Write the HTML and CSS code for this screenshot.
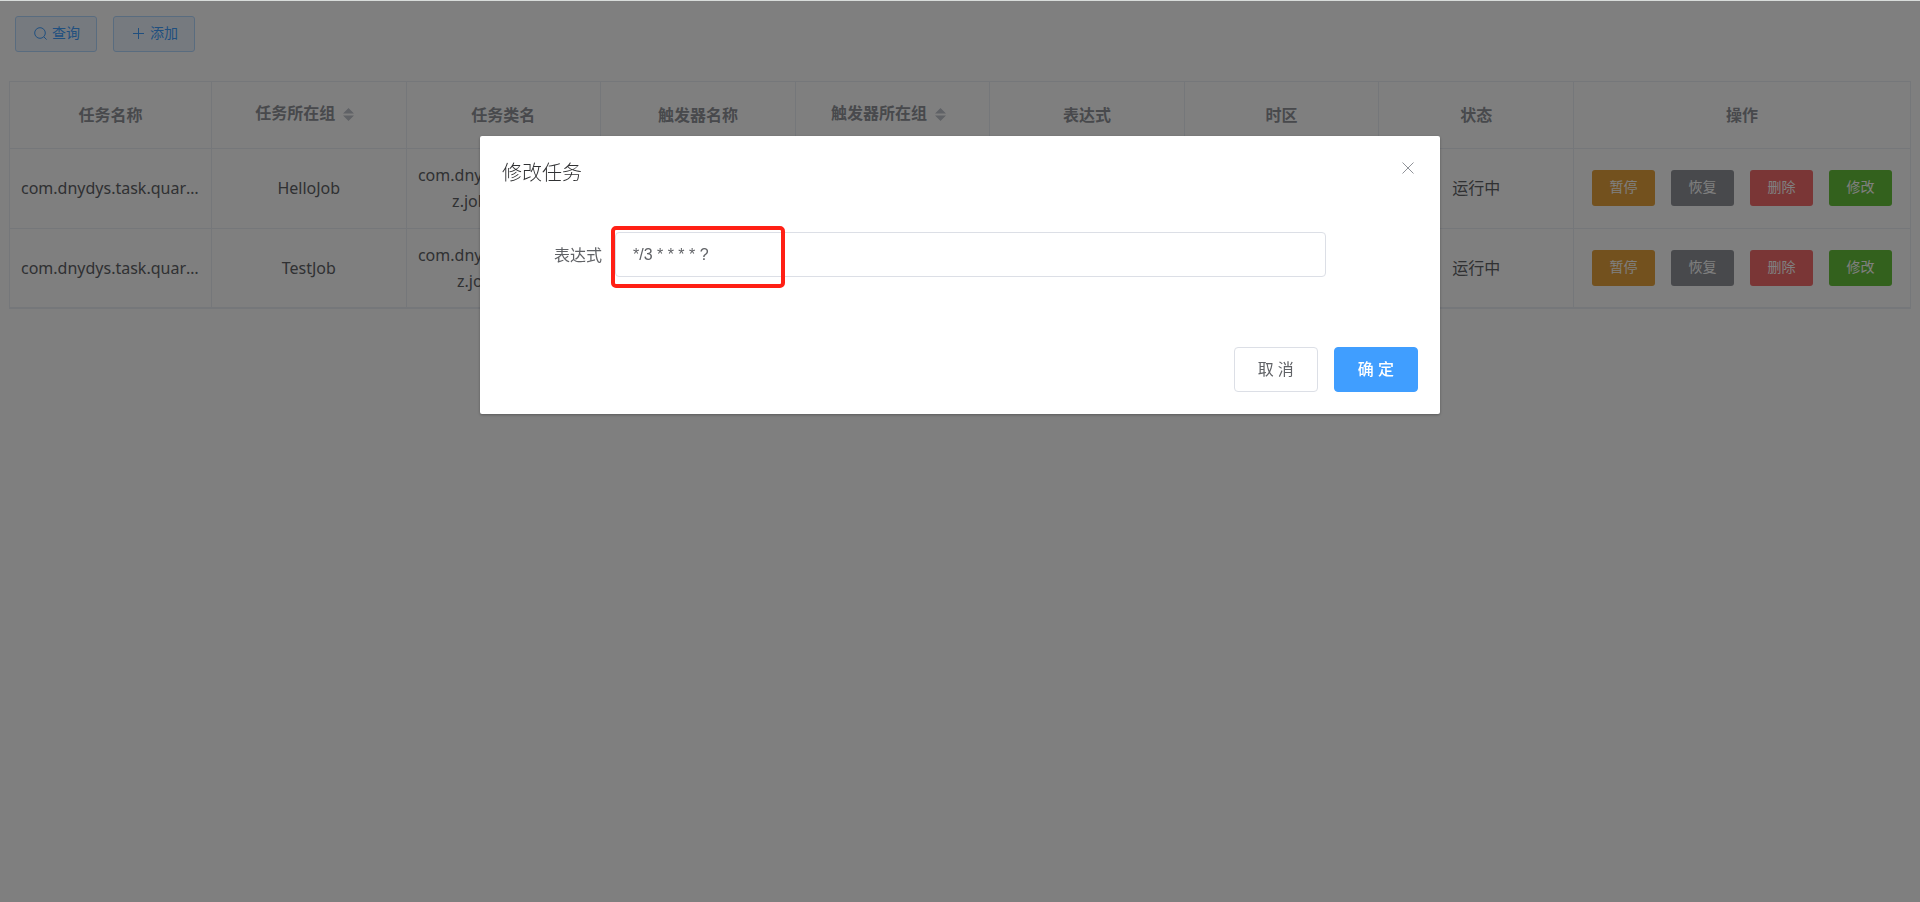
FILE: index.html
```html
<!DOCTYPE html>
<html lang="zh-CN">
<head>
<meta charset="utf-8">
<title>任务管理</title>
<link rel="stylesheet" href="styles.css">
</head>
<body>
<main class="page">
  <div class="toolbar">
    <button class="btn btn-plain" type="button"><svg class="icon" viewBox="0 0 13 13" aria-hidden="true"><circle cx="6" cy="6" r="5.3"/><path d="M9.8 9.8L12.6 12.6"/></svg>查询</button>
    <button class="btn btn-plain" type="button"><svg class="icon" viewBox="0 0 13 13" aria-hidden="true"><path d="M6.5 1V12M1 6.5H12"/></svg>添加</button>
  </div>
  <table class="table">
    <colgroup><col class="col-name"><col><col><col><col><col><col><col><col class="col-actions"></colgroup>
    <thead>
      <tr>
        <th>任务名称</th>
        <th class="sortable">任务所在组<svg class="caret" viewBox="0 0 12 14" aria-hidden="true"><path d="M6 0L12 6H0ZM6 14L0 8H12Z"/></svg></th>
        <th>任务类名</th>
        <th>触发器名称</th>
        <th class="sortable">触发器所在组<svg class="caret" viewBox="0 0 12 14" aria-hidden="true"><path d="M6 0L12 6H0ZM6 14L0 8H12Z"/></svg></th>
        <th>表达式</th>
        <th>时区</th>
        <th>状态</th>
        <th>操作</th>
      </tr>
    </thead>
    <tbody>
      <tr>
        <td class="ellipsis">com.dnydys.task.quartz.job.HelloJob</td>
        <td>HelloJob</td>
        <td>com.dnydys.task.quartz.job.HelloJob</td>
        <td></td><td></td><td></td><td></td>
        <td>运行中</td>
        <td><div class="actions">
          <button class="btn btn-warning" type="button">暂停</button>
          <button class="btn btn-info" type="button">恢复</button>
          <button class="btn btn-danger" type="button">删除</button>
          <button class="btn btn-success" type="button">修改</button>
        </div></td>
      </tr>
      <tr>
        <td class="ellipsis">com.dnydys.task.quartz.job.TestJob</td>
        <td>TestJob</td>
        <td>com.dnydys.task.quartz.job.TestJob</td>
        <td></td><td></td><td></td><td></td>
        <td>运行中</td>
        <td><div class="actions">
          <button class="btn btn-warning" type="button">暂停</button>
          <button class="btn btn-info" type="button">恢复</button>
          <button class="btn btn-danger" type="button">删除</button>
          <button class="btn btn-success" type="button">修改</button>
        </div></td>
      </tr>
    </tbody>
  </table>
</main>
<div class="overlay">
  <section class="dialog" role="dialog" aria-modal="true" aria-labelledby="dialog-title">
    <header class="dialog-header">
      <h2 class="dialog-title" id="dialog-title">修改任务</h2>
      <button class="close" type="button" aria-label="关闭"><svg viewBox="0 0 12 12" aria-hidden="true"><path d="M.5 .5L11.5 11.5M11.5 .5L.5 11.5"/></svg></button>
    </header>
    <form class="form">
      <label class="label" for="cron">表达式</label>
      <div class="field">
        <input class="input" id="cron" type="text" value="*/3 * * * * ?">
        <span class="highlight"></span>
      </div>
    </form>
    <footer class="dialog-footer">
      <button class="btn-large" type="button">取 消</button>
      <button class="btn-large btn-primary" type="button">确 定</button>
    </footer>
  </section>
</div>
</body>
</html>
```
FILE: styles.css
```css
* { box-sizing: border-box; }

body {
  margin: 0;
  background: #fff;
  color: #606266;
  font-family: "Noto Sans", "Noto Sans CJK SC", sans-serif;
  font-size: 16px;
  line-height: 26px;
}

button, input { font: inherit; margin: 0; }

.page {
  padding: 15px 9px 0;
  border-top: 1px solid #d8dcda;
}

.toolbar {
  display: flex;
  gap: 16px;
  padding: 0 6px;
  margin-bottom: 29px;
}

.btn {
  display: inline-flex;
  align-items: center;
  justify-content: center;
  gap: 5px;
  height: 36px;
  padding: 0 16px 2px;
  border: 1px solid transparent;
  border-radius: 3px;
  color: #fff;
  font-size: 14px;
  line-height: 14px;
}

.btn-plain {
  width: 82px;
  padding-right: 14px;
  background: #ecf5ff;
  border-color: #b3d8ff;
  color: #409eff;
}

.btn-warning { background: #e6a23c; }
.btn-info { background: #909399; }
.btn-danger { background: #f56c6c; }
.btn-success { background: #67c23a; }

.icon {
  flex: none;
  width: 13px;
  height: 13px;
  fill: none;
  stroke: currentColor;
}

.table {
  width: 100%;
  table-layout: fixed;
  border-collapse: separate;
  border-spacing: 0;
  border: 1px solid #ebeef5;
  border-width: 1px 0 0 1px;
  text-align: center;
}

.col-name { width: 202px; }
.col-actions { width: 337px; }

.table th, .table td {
  border: 1px solid #ebeef5;
  border-width: 0 1px 1px 0;
  padding: 0 11px;
  word-break: break-all;
}

.table th {
  height: 67px;
  color: #909399;
  font-weight: 700;
}

.table th.sortable { padding-bottom: 4px; }
.table td { height: 80px; padding-bottom: 1px; }
.table tbody tr:last-child td { border-bottom-width: 2px; padding-bottom: 0; }

.table td.ellipsis {
  overflow: hidden;
  text-overflow: ellipsis;
  white-space: nowrap;
}

.caret {
  width: 11px;
  height: 13px;
  margin: 0 8px;
  vertical-align: -2px;
  fill: #c0c4cc;
}

.actions {
  display: flex;
  justify-content: center;
  gap: 16px;
  margin: 0 -8px;
}

.actions .btn { width: 63px; padding: 0 0 2px; }

.overlay {
  position: fixed;
  inset: 1px 0 0;
  background: rgba(0, 0, 0, 0.5);
}

.dialog {
  width: 50%;
  margin: 15vh auto 0;
  background: #fff;
  border-radius: 2px;
  box-shadow: 0 1px 3px rgba(0, 0, 0, 0.3);
}

.dialog-header {
  display: flex;
  justify-content: space-between;
  padding: 22px 22px 9px;
}

.dialog-title {
  margin: 0;
  color: #303133;
  font-size: 20px;
  font-weight: 300;
  line-height: 30px;
}

.close {
  display: flex;
  align-items: center;
  height: 20px;
  padding: 0 4px;
  border: 0;
  background: none;
}

.close svg {
  width: 12px;
  height: 12px;
  fill: none;
  stroke: #909399;
}

.form {
  display: flex;
  align-items: center;
  padding: 35px 114px 35px 22px;
}

.label {
  width: 113px;
  padding-right: 13px;
  text-align: right;
}

.field {
  position: relative;
  flex: 1;
  display: flex;
}

.input {
  width: 100%;
  height: 45px;
  padding: 0 17px;
  border: 1px solid #dcdfe6;
  border-radius: 4px;
  color: #606266;
  font-family: "Liberation Sans", Arial, sans-serif;
}

.highlight {
  position: absolute;
  top: -6px;
  left: -4px;
  width: 174px;
  height: 62px;
  border: 4px solid #ff2015;
  border-radius: 5px;
  pointer-events: none;
}

.dialog-footer {
  display: flex;
  justify-content: flex-end;
  gap: 16px;
  padding: 35px 22px 22px;
}

.btn-large {
  height: 45px;
  padding: 0 23px 2px;
  border: 1px solid #dcdfe6;
  border-radius: 4px;
  background: #fff;
  color: #606266;
  line-height: 16px;
}

.btn-primary {
  border-color: #409eff;
  background: #409eff;
  color: #fff;
  font-weight: 500;
}
```
